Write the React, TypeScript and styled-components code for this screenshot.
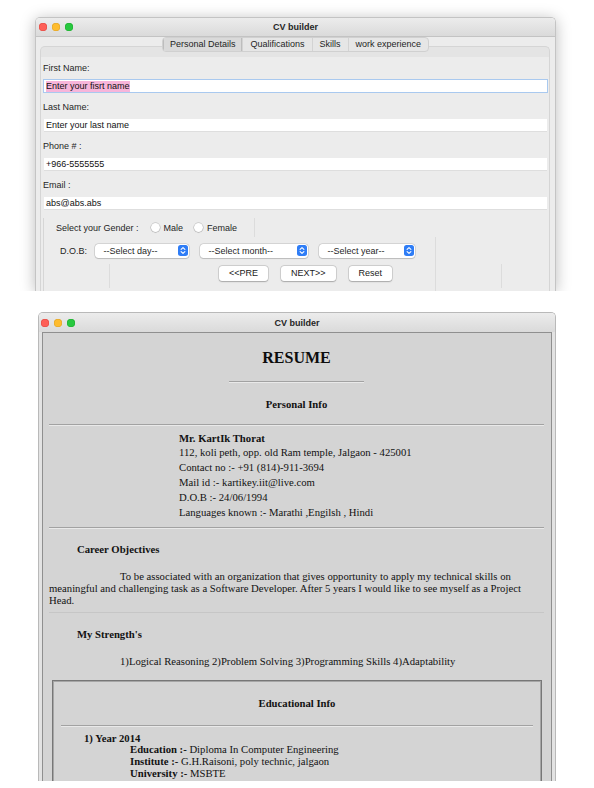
import React from "react";
import styled, { createGlobalStyle } from "styled-components";

const GlobalStyle = createGlobalStyle`
  html, body { margin: 0; padding: 0; background: #ffffff; }
  body { width: 594px; height: 788px; overflow: hidden; }
  * { box-sizing: border-box; }
`;

const SANS = `"Liberation Sans", Arial, sans-serif`;
const SERIF = `"Liberation Serif", "Times New Roman", serif`;

const Page = styled.div`
  width: 594px;
  display: flex;
  flex-direction: column;
`;

const ShadowClip = styled.div`
  height: 291px;
  padding: 17px 0 0 35px;
  overflow: hidden;
`;

const Window = styled.div<{ $w: number; $h: number; $shadow?: boolean }>`
  width: ${(p) => p.$w}px;
  height: ${(p) => p.$h}px;
  border: 1px solid ${(p) => (p.$shadow ? "#c4c4c4" : "#b9b9b9")};
  border-bottom: none;
  border-radius: 5px 5px 0 0;
  overflow: hidden;
  display: flex;
  flex-direction: column;
  box-shadow: ${(p) => (p.$shadow ? "0 2px 15px rgba(0,0,0,0.27)" : "none")};
`;

const BottomPlacement = styled.div`
  margin: 21px 0 0 38px;
`;

const TitleBar = styled.div<{ $border?: boolean }>`
  flex: none;
  height: 19px;
  display: grid;
  grid-template-columns: 1fr auto 1fr;
  align-items: center;
  background: linear-gradient(#ececec, #dadada);
  border-bottom: ${(p) => (p.$border ? "1px solid #c3c3c3" : "none")};
`;

const Lights = styled.div<{ $pad: number }>`
  display: flex;
  align-items: center;
  gap: 5px;
  padding-left: ${(p) => p.$pad}px;
`;

const Light = styled.span<{ $c: string; $b: string }>`
  width: 8px;
  height: 8px;
  border-radius: 50%;
  background: ${(p) => p.$c};
  box-shadow: inset 0 0 0 0.5px ${(p) => p.$b};
`;

const Title = styled.div`
  font: bold 9px ${SANS};
  color: #262626;
`;

/* ---------- top window ---------- */

const WinBody = styled.div`
  flex: 1;
  background: #ececec;
  display: flex;
  flex-direction: column;
`;

const TabRow = styled.div`
  display: flex;
  justify-content: center;
  position: relative;
  z-index: 1;
  height: 15px;
`;

const TabGroup = styled.div`
  display: flex;
  height: 15px;
  border: 1px solid #d0d0d0;
  border-radius: 4px;
  background: #e6e6e6;
  overflow: hidden;
`;

const Tab = styled.div<{ $active?: boolean }>`
  padding: 0 7px;
  font: 9px/13px ${SANS};
  color: #1e1e1e;
  background: ${(p) => (p.$active ? "#dadada" : "transparent")};
  box-shadow: ${(p) => (p.$active ? "inset 1px 0 0 #bdbdbd, inset -1px 0 0 #bdbdbd" : "none")};
  &:not(:first-child) {
    border-left: 1px solid #d3d3d3;
  }
`;

const Pane = styled.div`
  flex: 1;
  margin: -6px 5px 0 4px;
  border: 1px solid #d5d5d5;
  border-bottom: none;
  border-radius: 5px 5px 0 0;
  background: linear-gradient(#e4e4e4 0, #e4e4e4 10px, #ececec 10px);
  padding: 9px 1px 0;
  display: flex;
  flex-direction: column;
`;

const Field = styled.div`
  display: flex;
  flex-direction: column;
  margin-bottom: 3px;
`;

const FieldLabel = styled.div`
  height: 24px;
  padding-left: 1px;
  font: 9px/24px ${SANS};
  color: #1f1f1f;
`;

const Input = styled.div<{ $focus?: boolean }>`
  height: 12px;
  margin: 0 1px 0 2px;
  padding-left: 2px;
  background: #ffffff;
  font: 9px/12px ${SANS};
  color: #111;
  box-shadow: ${(p) =>
    p.$focus ? "0 0 0 1px #a9c9ef" : "0 0.5px 0 rgba(0,0,0,0.12)"};
  white-space: nowrap;
  overflow: hidden;
`;

const Selected = styled.span`
  background: #f7b5da;
  display: inline-block;
  line-height: 11px;
`;

const LowerPanel = styled.div`
  margin: 6px 0 0 1px;
  border-left: 1px solid #d6d6d6;
  display: flex;
  flex-direction: column;
  flex: 1;
`;

const GenderRow = styled.div`
  width: 211px;
  height: 19px;
  border-right: 1px solid #dcdcdc;
  display: flex;
  align-items: center;
  padding-left: 12px;
  font: 9px ${SANS};
  color: #1f1f1f;
`;

const GenderLabel = styled.span`
  margin-right: 12px;
`;

const Radio = styled.span`
  width: 9px;
  height: 9px;
  border-radius: 50%;
  background: #fff;
  box-shadow: 0 0 0 0.5px rgba(0, 0, 0, 0.22), 0 0.5px 1px rgba(0, 0, 0, 0.18);
  margin-right: 4px;
`;

const RadioText = styled.span`
  margin-right: 11px;
`;

const DobRow = styled.div`
  width: 392px;
  height: 27px;
  border-right: 1px solid #dcdcdc;
  display: flex;
  align-items: center;
  padding-left: 16px;
  gap: 11px;
  font: 9px ${SANS};
  color: #1f1f1f;
`;

const DobLabel = styled.span`
  width: 24px;
`;

const Select = styled.div<{ $w: number }>`
  width: ${(p) => p.$w}px;
  height: 14px;
  border-radius: 3.5px;
  background: #fff;
  box-shadow: 0 0 0 0.5px rgba(0, 0, 0, 0.2), 0 1px 1px rgba(0, 0, 0, 0.12);
  display: flex;
  align-items: center;
  justify-content: space-between;
  padding: 0 1.5px 0 8.5px;
  font: 9px/14px ${SANS};
  color: #1f1f1f;
`;

const ButtonLine = styled.div`
  width: 392px;
  height: 27px;
  border-right: 1px solid #dcdcdc;
`;

const ButtonPanel = styled.div`
  margin-left: 65px;
  width: 393px;
  height: 24px;
  border-left: 1px solid #dcdcdc;
  border-right: 1px solid #dcdcdc;
  display: flex;
  justify-content: center;
  align-items: flex-start;
  padding-top: 2px;
  gap: 13px;
`;

const Button = styled.div`
  height: 15px;
  padding: 0 10px;
  border-radius: 3px;
  background: #fff;
  box-shadow: 0 0 0 0.5px rgba(0, 0, 0, 0.18), 0 0.5px 1.5px rgba(0, 0, 0, 0.22);
  font: 9px/15px ${SANS};
  color: #1a1a1a;
`;

const Stepper = () => (
  <svg width="10" height="11" viewBox="0 0 10 11">
    <rect x="0" y="0" width="10" height="11" rx="2.5" fill="#2f7df6" />
    <path d="M3.1 4.4 L5 2.6 L6.9 4.4" fill="none" stroke="#fff" strokeWidth="1.1" strokeLinecap="round" strokeLinejoin="round" />
    <path d="M3.1 6.6 L5 8.4 L6.9 6.6" fill="none" stroke="#fff" strokeWidth="1.1" strokeLinecap="round" strokeLinejoin="round" />
  </svg>
);

/* ---------- bottom window ---------- */

const FrameBody = styled.div`
  flex: 1;
  background: #e3e3e3;
  padding: 0 3px;
  display: flex;
  flex-direction: column;
  overflow: hidden;
`;

const ScrollFrame = styled.div`
  flex: 1;
  border: 1px solid #8f8f8f;
  border-bottom: none;
  background: #d4d4d4;
  padding: 0 7px 0 6px;
  display: flex;
  flex-direction: column;
  font: 10.7px ${SERIF};
  color: #121212;
  overflow: hidden;
`;

const Resume = styled.div`
  margin-top: 15px;
  text-align: center;
  font: bold 16px/20px ${SERIF};
  color: #0d0d0d;
`;

const Rule = styled.div<{ $w?: number; $mt: number; $thin?: boolean; $side?: number }>`
  flex: none;
  height: ${(p) => (p.$thin ? 1 : 2)}px;
  width: ${(p) => (p.$w ? `${p.$w}px` : "auto")};
  margin: ${(p) => p.$mt}px ${(p) => (p.$w ? "auto" : `${p.$side ?? 0}px`)} 0;
  border-top: 1px solid ${(p) => (p.$thin ? "#c6c6c6" : "#a2a2a2")};
  border-bottom: ${(p) => (p.$thin ? "none" : "1px solid #e9e9e9")};
`;

const Heading = styled.div<{ $mt: number; $center?: boolean; $indent?: number }>`
  flex: none;
  margin-top: ${(p) => p.$mt}px;
  padding-left: ${(p) => p.$indent ?? 0}px;
  text-align: ${(p) => (p.$center ? "center" : "left")};
  font-weight: bold;
  line-height: 14px;
`;

const InfoBlock = styled.div`
  flex: none;
  margin: 4.6px 0 0 130px;
  line-height: 14.8px;
  white-space: nowrap;
`;

const Bold = styled.span`
  font-weight: bold;
`;

const Paragraph = styled.div`
  flex: none;
  margin: 14px 8px 0 0;
  line-height: 12px;
  text-indent: 71px;
`;

const Line = styled.div<{ $mt: number; $indent: number }>`
  flex: none;
  margin-top: ${(p) => p.$mt}px;
  padding-left: ${(p) => p.$indent}px;
  line-height: 14px;
  white-space: nowrap;
`;

const Table = styled.div`
  flex: none;
  height: 160px;
  margin: 12px 2px 0 3px;
  border: 1px solid #777;
  box-shadow: inset 0 0 0 1px #a6a6a6;
  padding: 1px;
  display: flex;
  flex-direction: column;
`;

const EduYear = styled.div`
  margin: 5px 0 0 30px;
  font-weight: bold;
  line-height: 12px;
`;

const EduLines = styled.div`
  margin-left: 76px;
  line-height: 11.8px;
  white-space: nowrap;
`;

const TrafficLights: React.FC<{ pad: number }> = ({ pad }) => (
  <Lights $pad={pad}>
    <Light $c="#fe5f57" $b="#e0443e" />
    <Light $c="#febc2e" $b="#dea123" />
    <Light $c="#28c840" $b="#1aab29" />
  </Lights>
);

export default function App() {
  return (
    <Page>
      <GlobalStyle />
      <ShadowClip>
        <Window $w={521} $h={274} $shadow>
          <TitleBar $border>
            <TrafficLights pad={3} />
            <Title>CV builder</Title>
            <span />
          </TitleBar>
          <WinBody>
            <TabRow>
              <TabGroup>
                <Tab $active>Personal Details</Tab>
                <Tab>Qualifications</Tab>
                <Tab>Skills</Tab>
                <Tab>work experience</Tab>
              </TabGroup>
            </TabRow>
            <Pane>
              <Field>
                <FieldLabel>First Name:</FieldLabel>
                <Input $focus>
                  <Selected>Enter your fisrt name</Selected>
                </Input>
              </Field>
              <Field>
                <FieldLabel>Last Name:</FieldLabel>
                <Input>Enter your last name</Input>
              </Field>
              <Field>
                <FieldLabel>Phone # :</FieldLabel>
                <Input>+966-5555555</Input>
              </Field>
              <Field>
                <FieldLabel>Email :</FieldLabel>
                <Input>abs@abs.abs</Input>
              </Field>
              <LowerPanel>
                <GenderRow>
                  <GenderLabel>Select your Gender :</GenderLabel>
                  <Radio />
                  <RadioText>Male</RadioText>
                  <Radio />
                  <RadioText>Female</RadioText>
                </GenderRow>
                <DobRow>
                  <DobLabel>D.O.B:</DobLabel>
                  <Select $w={94}>
                    <span>--Select day--</span>
                    <Stepper />
                  </Select>
                  <Select $w={108}>
                    <span>--Select month--</span>
                    <Stepper />
                  </Select>
                  <Select $w={96}>
                    <span>--Select year--</span>
                    <Stepper />
                  </Select>
                </DobRow>
                <ButtonLine>
                  <ButtonPanel>
                    <Button>&lt;&lt;PRE</Button>
                    <Button>NEXT&gt;&gt;</Button>
                    <Button>Reset</Button>
                  </ButtonPanel>
                </ButtonLine>
              </LowerPanel>
            </Pane>
          </WinBody>
        </Window>
      </ShadowClip>

      <BottomPlacement>
        <Window $w={518} $h={469}>
          <TitleBar>
            <TrafficLights pad={2} />
            <Title>CV builder</Title>
            <span />
          </TitleBar>
          <FrameBody>
            <ScrollFrame>
              <Resume>RESUME</Resume>
              <Rule $w={135} $mt={13} />
              <Heading $mt={14} $center>
                Personal Info
              </Heading>
              <Rule $mt={13} />
              <InfoBlock>
                <Bold>Mr. KartIk Thorat</Bold>
                <div>112, koli peth, opp. old Ram temple, Jalgaon - 425001</div>
                <div>Contact no :- +91 (814)-911-3694</div>
                <div>Mail id :- kartikey.iit@live.com</div>
                <div>D.O.B :- 24/06/1994</div>
                <div>Languages known :- Marathi ,Engilsh , Hindi</div>
              </InfoBlock>
              <Rule $mt={7.6} />
              <Heading $mt={13} $indent={28}>
                Career Objectives
              </Heading>
              <Paragraph>
                To be associated with an organization that gives opportunity to apply my technical skills on
                meaningful and challenging task as a Software Developer. After 5 years I would like to see
                myself as a Project Head.
              </Paragraph>
              <Rule $mt={6} $thin />
              <Heading $mt={14} $indent={28}>
                My Strength's
              </Heading>
              <Line $mt={13} $indent={71}>
                1)Logical Reasoning 2)Problem Solving 3)Programming Skills 4)Adaptability
              </Line>
              <Table>
                <Heading $mt={14} $center>
                  Educational Info
                </Heading>
                <Rule $mt={15} $side={7} />
                <EduYear>1) Year 2014</EduYear>
                <EduLines>
                  <div>
                    <Bold>Education :-</Bold> Diploma In Computer Engineering
                  </div>
                  <div>
                    <Bold>Institute :-</Bold> G.H.Raisoni, poly technic, jalgaon
                  </div>
                  <div>
                    <Bold>University :-</Bold> MSBTE
                  </div>
                </EduLines>
              </Table>
            </ScrollFrame>
          </FrameBody>
        </Window>
      </BottomPlacement>
    </Page>
  );
}
